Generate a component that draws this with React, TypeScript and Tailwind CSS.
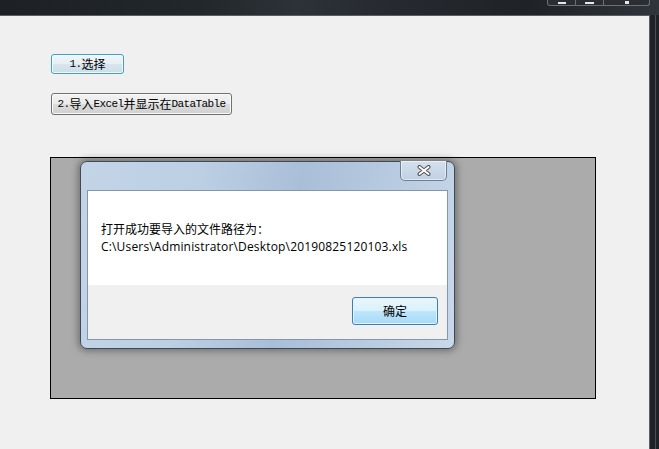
import React from "react";

const mono = { fontFamily: '"Liberation Mono", "DejaVu Sans Mono", monospace' };

function Mono({ children }: { children: React.ReactNode }) {
  return (
    <span className="text-[11px] tracking-[-0.6px]" style={mono}>
      {children}
    </span>
  );
}

export default function App() {
  return (
    <div
      className="relative w-[659px] h-[449px] overflow-hidden bg-[#1e2227] flex flex-col"
      style={{ fontFamily: '"Noto Sans CJK SC", sans-serif' }}
    >
      {/* top frame */}
      <div className="h-[15px] w-full shrink-0 bg-[linear-gradient(90deg,#1d2126_0%,#22272c_30%,#2d3238_45%,#262a30_60%,#1f2328_80%,#30353b_100%)] relative">
        <div className="absolute right-[9px] top-0 flex h-[6px] border border-t-0 border-[#6c7075] rounded-b-[3px] bg-[#2a2e33]">
          <div className="w-[28px] border-r border-[#6c7075] flex items-end justify-center">
            <div className="w-[8px] h-[2px] bg-[#e8e8e8] mb-[1px]" />
          </div>
          <div className="w-[28px] border-r border-[#6c7075] flex items-end justify-center">
            <div className="w-[9px] h-[2px] bg-[#e8e8e8] mb-[1px]" />
          </div>
          <div className="w-[45px] flex items-end justify-center">
            <div className="w-[4px] h-[3px] bg-[#e8e8e8] mb-[1px]" />
          </div>
        </div>
      </div>
      <div className="flex flex-1">
        {/* client area */}
        <div className="relative w-[649px] h-full bg-[#f0f0f0] border-t border-[#5a5e63]">
          <div className="pl-[51px] pt-[38px] flex flex-col items-start">
            <button className="w-[73px] h-[20px] rounded-[3px] border border-[#3c9fd6] bg-[linear-gradient(#f1f6f9_0%,#e6eef4_50%,#d8e5ee_51%,#cddce7_100%)] shadow-[inset_0_0_0_1px_#f6fbfe] text-[12px] leading-none text-[#000] flex items-center justify-center">
              <Mono>1.</Mono>
              <span className="text-[12px]">选择</span>
            </button>
            <button className="mt-[19px] w-[181px] h-[22px] rounded-[3px] border border-[#707070] bg-[linear-gradient(#f2f2f2_0%,#ebebeb_50%,#dddddd_51%,#cfcfcf_100%)] shadow-[inset_0_0_0_1px_#fbfbfb] text-[12px] leading-none text-black flex items-center justify-center">
              <Mono>2.</Mono>
              <span>导入</span>
              <Mono>Excel</Mono>
              <span>并显示在</span>
              <Mono>DataTable</Mono>
            </button>
          </div>
          {/* gray panel */}
          <div className="absolute left-[50px] top-[141px] w-[546px] h-[242px] bg-[#ababab] border border-black" />
          {/* dialog */}
          <div className="absolute left-[80px] top-[145px] w-[375px] h-[188px] rounded-[7px] border border-[#3f4a56] bg-[linear-gradient(100deg,#c3d4e7_0%,#bccfe3_30%,#a9bfd8_55%,#b2c6dd_70%,#c9d8ea_100%)] shadow-[0_0_7px_2px_rgba(0,0,0,0.35)] flex flex-col">
            <div className="h-[28px] shrink-0 relative">
              <div className="absolute right-[7px] top-[-1px] w-[47px] h-[20px] rounded-b-[5px] border border-t-0 border-[#6f7f92] bg-[linear-gradient(#d4e0ec,#c0d1e3)] shadow-[inset_0_0_0_1px_rgba(255,255,255,0.5)] flex items-center justify-center">
                <svg width="14" height="11" viewBox="0 0 14 11">
                  <path
                    d="M2.5 2 L7 5.5 L11.5 2 M2.5 9 L7 5.5 L11.5 9"
                    stroke="#505050"
                    strokeWidth="4"
                    fill="none"
                    strokeLinecap="round"
                  />
                  <path
                    d="M2.5 2 L7 5.5 L11.5 2 M2.5 9 L7 5.5 L11.5 9"
                    stroke="#ffffff"
                    strokeWidth="2"
                    fill="none"
                    strokeLinecap="round"
                  />
                </svg>
              </div>
            </div>
            <div className="mx-[6px] border border-[#8396ad] flex flex-col h-[150px]">
              <div className="bg-white h-[94px] pl-[13px] pt-[29px] text-[12px] leading-[18px] text-black">
                <div style={{ fontFamily: '"Noto Sans CJK SC", sans-serif' }}>打开成功要导入的文件路径为：</div>
                <div style={{ fontFamily: '"Open Sans", "Noto Sans", sans-serif' }} className="text-[12px] tracking-[0.17px]">
                  C:\Users\Administrator\Desktop\20190825120103.xls
                </div>
              </div>
              <div className="flex-1 bg-[#f0f0f0] flex justify-end items-start pt-[12px] pr-[9px]">
                <button className="w-[86px] h-[28px] rounded-[3px] border border-[#3c7fb1] bg-[linear-gradient(#eaf6fd_0%,#d9f0fc_50%,#bee6fd_51%,#a7d9f5_100%)] shadow-[inset_0_0_0_1px_#e4f4fc] text-[12px] text-black flex items-center justify-center">
                  确定
                </button>
              </div>
            </div>
          </div>
        </div>
        {/* right frame */}
        <div className="flex-1 flex bg-[#1f2328]">
          <div className="w-[1px] bg-[#5d6166]" />
          <div className="w-[5px]" />
          <div className="w-[1px] bg-[#4b4f55]" />
          <div className="flex-1" />
        </div>
      </div>
    </div>
  );
}
